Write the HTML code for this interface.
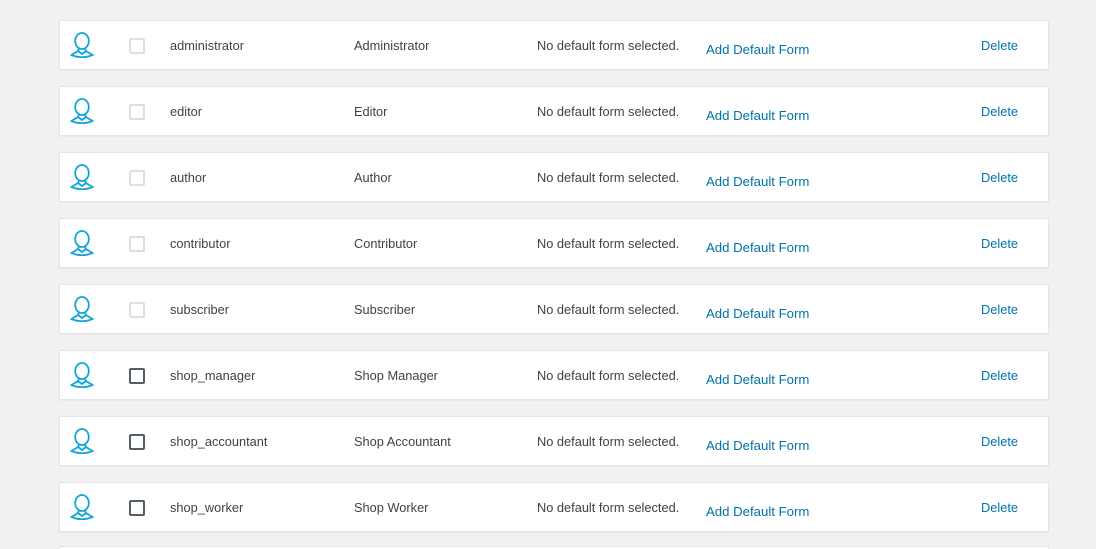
<!DOCTYPE html>
<html><head><style>
html,body{margin:0;height:549px;overflow:hidden}
body{background:#f1f1f1;width:1096px;font-family:"Liberation Sans",Arial,sans-serif;position:relative}
.row{position:absolute;left:59px;width:988px;height:48px;background:#fff;border:1px solid #e2e4e7;box-shadow:0 1px 1px rgba(0,0,0,.04)}
.row svg{position:absolute;left:10px;top:11px}
.cb{position:absolute;left:69px;top:17px;width:12px;height:12px;border:2px solid #dcdee1;border-radius:2px}
.cb.d{border-color:#555d66}
.t{position:absolute;top:17px;font-size:12.8px;color:#3c434a;white-space:nowrap}
.a{position:absolute;top:21px;left:646px;font-size:13.2px;color:#0073aa}
.del{position:absolute;top:17px;left:921px;font-size:12.8px;color:#0073aa}
</style></head><body>
<div class="row" style="top:20px"><svg width="24" height="26" viewBox="0 0 24 26" fill="none" stroke="#0ea5d8" stroke-width="1.8"><ellipse cx="12" cy="9" rx="6.8" ry="8"/><path d="M9 16.5l-1 2.5L1.5 23Q12 27.5 22.5 23L16 19 15 16.5M8 19l4 3 4-3"/></svg><div class="cb"></div><div class="t" style="left:110px">administrator</div><div class="t" style="left:294px">Administrator</div><div class="t" style="left:477px">No default form selected.</div><div class="a">Add Default Form</div><div class="del">Delete</div></div>
<div class="row" style="top:86px"><svg width="24" height="26" viewBox="0 0 24 26" fill="none" stroke="#0ea5d8" stroke-width="1.8"><ellipse cx="12" cy="9" rx="6.8" ry="8"/><path d="M9 16.5l-1 2.5L1.5 23Q12 27.5 22.5 23L16 19 15 16.5M8 19l4 3 4-3"/></svg><div class="cb"></div><div class="t" style="left:110px">editor</div><div class="t" style="left:294px">Editor</div><div class="t" style="left:477px">No default form selected.</div><div class="a">Add Default Form</div><div class="del">Delete</div></div>
<div class="row" style="top:152px"><svg width="24" height="26" viewBox="0 0 24 26" fill="none" stroke="#0ea5d8" stroke-width="1.8"><ellipse cx="12" cy="9" rx="6.8" ry="8"/><path d="M9 16.5l-1 2.5L1.5 23Q12 27.5 22.5 23L16 19 15 16.5M8 19l4 3 4-3"/></svg><div class="cb"></div><div class="t" style="left:110px">author</div><div class="t" style="left:294px">Author</div><div class="t" style="left:477px">No default form selected.</div><div class="a">Add Default Form</div><div class="del">Delete</div></div>
<div class="row" style="top:218px"><svg width="24" height="26" viewBox="0 0 24 26" fill="none" stroke="#0ea5d8" stroke-width="1.8"><ellipse cx="12" cy="9" rx="6.8" ry="8"/><path d="M9 16.5l-1 2.5L1.5 23Q12 27.5 22.5 23L16 19 15 16.5M8 19l4 3 4-3"/></svg><div class="cb"></div><div class="t" style="left:110px">contributor</div><div class="t" style="left:294px">Contributor</div><div class="t" style="left:477px">No default form selected.</div><div class="a">Add Default Form</div><div class="del">Delete</div></div>
<div class="row" style="top:284px"><svg width="24" height="26" viewBox="0 0 24 26" fill="none" stroke="#0ea5d8" stroke-width="1.8"><ellipse cx="12" cy="9" rx="6.8" ry="8"/><path d="M9 16.5l-1 2.5L1.5 23Q12 27.5 22.5 23L16 19 15 16.5M8 19l4 3 4-3"/></svg><div class="cb"></div><div class="t" style="left:110px">subscriber</div><div class="t" style="left:294px">Subscriber</div><div class="t" style="left:477px">No default form selected.</div><div class="a">Add Default Form</div><div class="del">Delete</div></div>
<div class="row" style="top:350px"><svg width="24" height="26" viewBox="0 0 24 26" fill="none" stroke="#0ea5d8" stroke-width="1.8"><ellipse cx="12" cy="9" rx="6.8" ry="8"/><path d="M9 16.5l-1 2.5L1.5 23Q12 27.5 22.5 23L16 19 15 16.5M8 19l4 3 4-3"/></svg><div class="cb d"></div><div class="t" style="left:110px">shop_manager</div><div class="t" style="left:294px">Shop Manager</div><div class="t" style="left:477px">No default form selected.</div><div class="a">Add Default Form</div><div class="del">Delete</div></div>
<div class="row" style="top:416px"><svg width="24" height="26" viewBox="0 0 24 26" fill="none" stroke="#0ea5d8" stroke-width="1.8"><ellipse cx="12" cy="9" rx="6.8" ry="8"/><path d="M9 16.5l-1 2.5L1.5 23Q12 27.5 22.5 23L16 19 15 16.5M8 19l4 3 4-3"/></svg><div class="cb d"></div><div class="t" style="left:110px">shop_accountant</div><div class="t" style="left:294px">Shop Accountant</div><div class="t" style="left:477px">No default form selected.</div><div class="a">Add Default Form</div><div class="del">Delete</div></div>
<div class="row" style="top:482px"><svg width="24" height="26" viewBox="0 0 24 26" fill="none" stroke="#0ea5d8" stroke-width="1.8"><ellipse cx="12" cy="9" rx="6.8" ry="8"/><path d="M9 16.5l-1 2.5L1.5 23Q12 27.5 22.5 23L16 19 15 16.5M8 19l4 3 4-3"/></svg><div class="cb d"></div><div class="t" style="left:110px">shop_worker</div><div class="t" style="left:294px">Shop Worker</div><div class="t" style="left:477px">No default form selected.</div><div class="a">Add Default Form</div><div class="del">Delete</div></div>
<div class="row" style="top:546px;height:2px"></div>
</body></html>
